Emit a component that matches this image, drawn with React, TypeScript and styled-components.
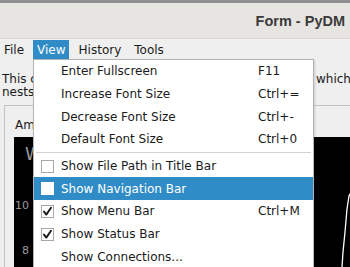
import React from "react";
import styled, { createGlobalStyle } from "styled-components";

const GlobalStyle = createGlobalStyle`
  html, body { margin: 0; padding: 0; overflow: hidden; background: #efefef; }
  body { font-family: "DejaVu Sans", "Liberation Sans", sans-serif; font-size: 12px; color: #1a1a1a; }
`;

const Window = styled.div`
  position: relative;
  width: 350px;
  height: 267px;
  overflow: hidden;
  background: #efefef;
  display: flex;
  flex-direction: column;
`;

const TopEdge = styled.div`
  height: 3px;
  flex: none;
  background: #8e8e8e;
`;

const TitleBar = styled.div`
  height: 35px;
  flex: none;
  background: #e7e5e2;
  border-bottom: 1px solid #d9d7d3;
  display: flex;
  align-items: center;
  justify-content: flex-end;
  padding-right: 5px;
  font-family: "Liberation Sans", "DejaVu Sans", sans-serif;
  font-weight: bold;
  font-size: 14.5px;
  color: #3b3b3b;
`;

const MenuBar = styled.div`
  height: 20px;
  flex: none;
  display: flex;
  align-items: stretch;
  gap: 6px;
  padding-left: 0;
  background: #efefef;
`;

const MenuBarItem = styled.div<{ $active?: boolean }>`
  display: flex;
  align-items: center;
  padding: 1px 3px 0 4px;
  margin-top: 1px;
  background: ${(p) => (p.$active ? "#308cc6" : "transparent")};
  color: ${(p) => (p.$active ? "#ffffff" : "#1a1a1a")};
`;

const Content = styled.div`
  flex: 1;
  display: flex;
  flex-direction: column;
  padding-top: 14px;
  min-height: 0;
`;

const Description = styled.div`
  padding-left: 2px;
  line-height: 13px;
`;

const DescLine = styled.div`
  display: grid;
  grid-template-columns: 314px auto;
  white-space: nowrap;
  overflow: hidden;
`;

const DescCell = styled.span`
  overflow: hidden;
`;

const GroupBox = styled.div`
  margin-top: 6px;
  margin-left: 4px;
  flex: 1;
  border-top: 1px solid #c4c4c4;
  border-left: 1px solid #c4c4c4;
  display: flex;
  flex-direction: column;
  padding-left: 9px;
  min-height: 0;
`;

const GroupTitle = styled.div`
  height: 31px;
  flex: none;
  display: flex;
  align-items: center;
  padding-left: 1px;
  padding-top: 7px;
  box-sizing: border-box;
  white-space: nowrap;
`;

const Plot = styled.div`
  flex: 1;
  background: #000;
  min-height: 0;
  overflow: hidden;
`;

const PlotSvg = styled.svg`
  display: block;
  width: 340px;
  height: 130px;
`;

const Dropdown = styled.div`
  position: absolute;
  left: 33px;
  top: 59px;
  width: 279px;
  background: #ffffff;
  border: 1px solid #b4b4b4;
  box-shadow: 1px 1px 2px rgba(0, 0, 0, 0.15);
  display: flex;
  flex-direction: column;
`;

const Item = styled.div<{ $active?: boolean }>`
  height: 22.7px;
  display: grid;
  grid-template-columns: 27px 197px auto;
  align-items: center;
  white-space: nowrap;
  background: ${(p) => (p.$active ? "#308cc6" : "transparent")};
  color: ${(p) => (p.$active ? "#ffffff" : "#1a1a1a")};
`;

const CheckCell = styled.div`
  display: flex;
  align-items: center;
  padding-left: 7px;
`;

const Box = styled.div<{ $active?: boolean }>`
  width: 11px;
  height: 11px;
  border: 1px solid ${(p) => (p.$active ? "#ffffff" : "#a8a8a8")};
  background: #ffffff;
  display: flex;
  align-items: center;
  justify-content: center;
`;

const Shortcut = styled.span``;

const Separator = styled.div`
  height: 4px;
  display: flex;
  align-items: center;
  padding: 0 2px;
  &::after {
    content: "";
    flex: 1;
    height: 1px;
    background: #d2d2d2;
  }
`;

type Entry =
  | { kind: "sep" }
  | { kind: "item"; label: string; shortcut?: string; check?: "on" | "off"; active?: boolean };

const entries: Entry[] = [
  { kind: "item", label: "Enter Fullscreen", shortcut: "F11" },
  { kind: "item", label: "Increase Font Size", shortcut: "Ctrl+=" },
  { kind: "item", label: "Decrease Font Size", shortcut: "Ctrl+-" },
  { kind: "item", label: "Default Font Size", shortcut: "Ctrl+0" },
  { kind: "sep" },
  { kind: "item", label: "Show File Path in Title Bar", check: "off" },
  { kind: "item", label: "Show Navigation Bar", check: "off", active: true },
  { kind: "item", label: "Show Menu Bar", shortcut: "Ctrl+M", check: "on" },
  { kind: "item", label: "Show Status Bar", check: "on" },
  { kind: "item", label: "Show Connections..." },
];

const CheckMark = () => (
  <svg width="11" height="11" viewBox="0 0 11 11">
    <path d="M2 5.6 L4.3 8.6 L9 1.8" fill="none" stroke="#1a1a1a" strokeWidth="1.9" strokeLinecap="round" strokeLinejoin="round" />
  </svg>
);

export default function App() {
  return (
    <>
      <GlobalStyle />
      <Window>
        <TopEdge />
        <TitleBar>Form - PyDM</TitleBar>
        <MenuBar>
          <MenuBarItem>File</MenuBarItem>
          <MenuBarItem $active>View</MenuBarItem>
          <MenuBarItem>History</MenuBarItem>
          <MenuBarItem>Tools</MenuBarItem>
        </MenuBar>
        <Content>
          <Description>
            <DescLine>
              <DescCell>This c</DescCell>
              <DescCell>which</DescCell>
            </DescLine>
            <DescLine>
              <DescCell>nests</DescCell>
              <DescCell></DescCell>
            </DescLine>
          </Description>
          <GroupBox>
            <GroupTitle>Am</GroupTitle>
            <Plot>
              <PlotSvg viewBox="0 0 340 130">
                <text x="11" y="23" fontFamily="DejaVu Sans, sans-serif" fontSize="17" fill="#9a9a9a">W</text>
                <text x="15" y="72" textAnchor="end" fontFamily="DejaVu Sans, sans-serif" fontSize="11" fill="#9a9a9a">10</text>
                <text x="15" y="117" textAnchor="end" fontFamily="DejaVu Sans, sans-serif" fontSize="11" fill="#9a9a9a">8</text>
                <path d="M340 52 L336 57 L335 59 L333 72 L331 95 L329 115 L328 130" fill="none" stroke="#ffffff" strokeWidth="1.3" />
              </PlotSvg>
            </Plot>
          </GroupBox>
        </Content>
        <Dropdown>
          {entries.map((e, i) =>
            e.kind === "sep" ? (
              <Separator key={i} />
            ) : (
              <Item key={i} $active={e.active}>
                <CheckCell>
                  {e.check && <Box $active={e.active}>{e.check === "on" && <CheckMark />}</Box>}
                </CheckCell>
                <span>{e.label}</span>
                <Shortcut>{e.shortcut}</Shortcut>
              </Item>
            )
          )}
        </Dropdown>
      </Window>
    </>
  );
}
